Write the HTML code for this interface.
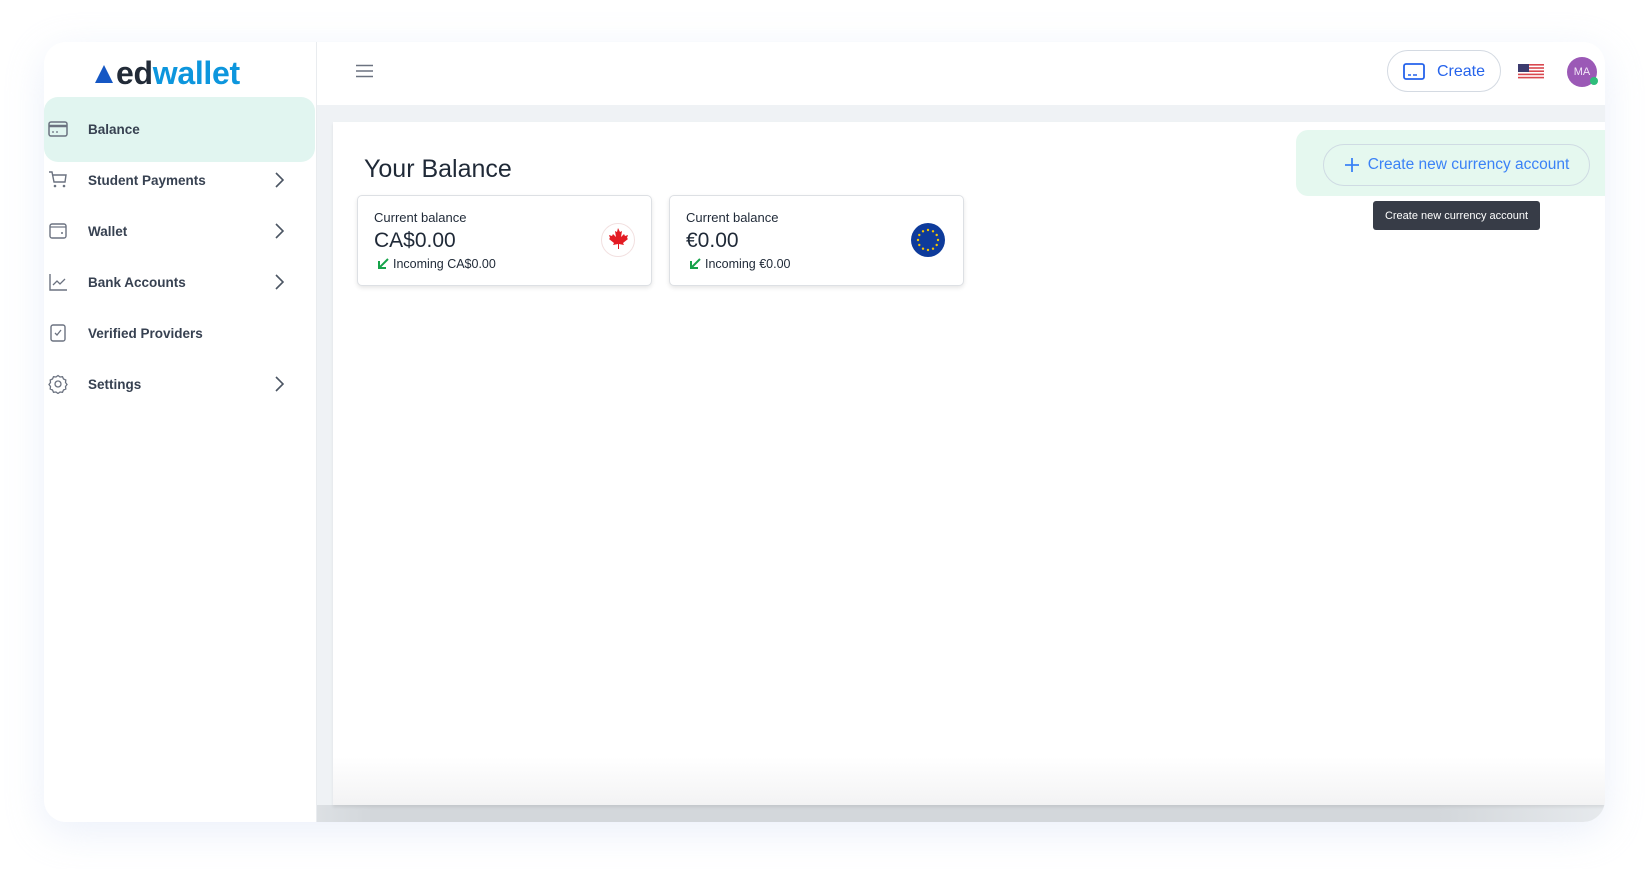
<!DOCTYPE html>
<html><head><meta charset="utf-8"><style>
*{box-sizing:border-box;margin:0;padding:0}
body{width:1650px;height:869px;background:#fff;font-family:"Liberation Sans",sans-serif;position:relative;overflow:hidden}
.abs{position:absolute}
.card{left:44px;top:42px;width:1561px;height:780px;background:#fff;border-radius:22px;box-shadow:0 10px 40px rgba(210,222,245,.45);overflow:hidden}
.side{left:0;top:0;width:273px;height:780px;background:#fff;border-right:1px solid #e9ecef}
.gray{left:273px;top:63px;width:1288px;height:717px;background:#eff2f5}
.botband{left:160px;top:763px;width:1401px;height:17px;background:linear-gradient(90deg,rgba(211,215,219,0),#d3d7db 12%,#d3d7db 88%,rgba(211,215,219,.3))}
.head{left:274px;top:0;width:1287px;height:63px;background:#fff}
.panel{left:289px;top:80px;width:1272px;height:683px;background:linear-gradient(#fff 93%,#f3f3f4);box-shadow:0 2px 3px rgba(0,0,0,.08)}
.item{position:absolute;left:0;width:273px;height:50px;display:flex;align-items:center;font-size:13.5px;font-weight:bold;color:#374151}
.item svg.i{position:absolute;left:4px}
.item span{position:absolute;left:44px}
.item svg.c{position:absolute;left:230px}
.bc{position:absolute;top:153px;width:295px;height:91px;background:#fff;border:1px solid #dde0e4;border-radius:5px;box-shadow:0 2px 4px rgba(0,0,0,.1)}
.bc .l{position:absolute;left:16px;top:14px;font-size:13px;color:#1f2937}
.bc .a{position:absolute;left:16px;top:33px;font-size:21px;color:#1f2937}
.bc .n{position:absolute;left:18px;top:61px;font-size:12.5px;color:#1f2937;display:flex;align-items:center;gap:3px}
</style></head><body>
<div class="abs card">
  <div class="abs gray"></div>
  <div class="abs botband"></div>
  <div class="abs head"></div>
  <div class="abs panel">
    <div class="abs" style="left:31px;top:33px;font-size:25px;color:#1f2937">Your Balance</div>
    <div class="bc" style="left:24px;top:73px">
      <div class="l">Current balance</div><div class="a">CA$0.00</div>
      <div class="n"><svg width="14" height="14" viewBox="0 0 14 14"><path d="M12 2L3 11M3 4v7h7" stroke="#16a34a" stroke-width="2" fill="none"/></svg>Incoming CA$0.00</div>
      <svg class="abs" style="left:243px;top:27px" width="34" height="34" viewBox="0 0 34 34"><circle cx="17" cy="17" r="16.5" fill="#fff" stroke="#f2e0e0"/><path d="M17 5l2 4 2-1-1 6 3-3 1 2 3-1-1 3 1 1-5 4 1 2-5-1v5h-1v-5l-5 1 1-2-5-4 1-1-1-3 3 1 1-2 3 3-1-6 2 1z" fill="#e31b23"/></svg>
    </div>
    <div class="bc" style="left:336px;top:73px">
      <div class="l">Current balance</div><div class="a">€0.00</div>
      <div class="n"><svg width="14" height="14" viewBox="0 0 14 14"><path d="M12 2L3 11M3 4v7h7" stroke="#16a34a" stroke-width="2" fill="none"/></svg>Incoming €0.00</div>
      <svg class="abs" style="left:241px;top:27px" width="34" height="34" viewBox="0 0 34 34"><circle cx="17" cy="17" r="17" fill="#0e3b9b"/><g fill="#f5c400"><circle cx="17" cy="7" r="1.2"/><circle cx="22" cy="8.3" r="1.2"/><circle cx="25.7" cy="12" r="1.2"/><circle cx="27" cy="17" r="1.2"/><circle cx="25.7" cy="22" r="1.2"/><circle cx="22" cy="25.7" r="1.2"/><circle cx="17" cy="27" r="1.2"/><circle cx="12" cy="25.7" r="1.2"/><circle cx="8.3" cy="22" r="1.2"/><circle cx="7" cy="17" r="1.2"/><circle cx="8.3" cy="12" r="1.2"/><circle cx="12" cy="8.3" r="1.2"/></g></svg>
    </div>
  </div>
  <div class="abs" style="left:1252px;top:88px;width:309px;height:66px;background:#e5f8ef;border-radius:12px 0 0 12px"></div>
  <div class="abs" style="left:1279px;top:102px;width:267px;height:42px;border:1px solid #cfdbe3;border-radius:21px;display:flex;align-items:center;justify-content:center;gap:8px;color:#3b82f6;font-size:15.5px">
    <svg width="16" height="16" viewBox="0 0 16 16"><path d="M8 1v14M1 8h14" stroke="#3b82f6" stroke-width="1.8"/></svg>Create new currency account</div>
  <div class="abs" style="left:1329px;top:159px;width:167px;height:29px;background:#373c47;border-radius:3px;color:#fff;font-size:11px;display:flex;align-items:center;justify-content:center">Create new currency account</div>
  <div class="abs side">
    <div class="abs" style="left:51px;top:13px;display:flex;align-items:center">
      <svg width="18" height="18" viewBox="0 0 18 18"><path d="M9 0L18 18H0z" fill="#1557c4"/></svg>
      <span style="font-size:32px;font-weight:bold;letter-spacing:-0.3px;color:#222b38;margin-left:3px">ed</span><span style="font-size:32px;font-weight:bold;letter-spacing:-0.3px;color:#0d96dd">wallet</span>
    </div>
    <div class="abs" style="left:0;top:55px;width:271px;height:65px;background:#e1f5f0;border-radius:14px"></div>
    <div class="item" style="top:62px"><svg class="i" width="20" height="18" viewBox="0 0 20 18"><rect x="1" y="2" width="18" height="14" rx="2" fill="none" stroke="#6b7280" stroke-width="1.5"/><path d="M1 6h18" stroke="#6b7280" stroke-width="2.5"/><path d="M4 12h2M8 12h2" stroke="#6b7280" stroke-width="1.3"/></svg><span>Balance</span></div>
    <div class="item" style="top:113px"><svg class="i" width="20" height="20" viewBox="0 0 20 20"><path d="M1 2h3l2 10h11l1-7H5" fill="none" stroke="#6b7280" stroke-width="1.4"/><circle cx="7" cy="16" r="1.3" fill="#6b7280"/><circle cx="16" cy="16" r="1.3" fill="#6b7280"/></svg><span>Student Payments</span><svg class="c" width="10" height="16" viewBox="0 0 10 16"><path d="M2 1l7 7-7 7" fill="none" stroke="#4b5563" stroke-width="1.6"/></svg></div>
    <div class="item" style="top:164px"><svg class="i" width="20" height="20" viewBox="0 0 20 20"><rect x="2" y="3" width="16" height="14" rx="2" fill="none" stroke="#6b7280" stroke-width="1.4"/><path d="M2 6h16" stroke="#6b7280" stroke-width="1.2"/><circle cx="14" cy="12" r="1" fill="#6b7280"/></svg><span>Wallet</span><svg class="c" width="10" height="16" viewBox="0 0 10 16"><path d="M2 1l7 7-7 7" fill="none" stroke="#4b5563" stroke-width="1.6"/></svg></div>
    <div class="item" style="top:215px"><svg class="i" width="20" height="20" viewBox="0 0 20 20"><path d="M2 2v16h17" fill="none" stroke="#6b7280" stroke-width="1.4"/><path d="M5 13l4-4 3 3 5-5" fill="none" stroke="#6b7280" stroke-width="1.3"/></svg><span>Bank Accounts</span><svg class="c" width="10" height="16" viewBox="0 0 10 16"><path d="M2 1l7 7-7 7" fill="none" stroke="#4b5563" stroke-width="1.6"/></svg></div>
    <div class="item" style="top:266px"><svg class="i" width="20" height="20" viewBox="0 0 20 20"><rect x="3" y="2" width="14" height="16" rx="2" fill="none" stroke="#6b7280" stroke-width="1.4"/><path d="M7 10l2 2 4-5" fill="none" stroke="#6b7280" stroke-width="1.3"/></svg><span>Verified Providers</span></div>
    <div class="item" style="top:317px"><svg class="i" width="20" height="20" viewBox="0 0 20 20"><path d="M10 1.5l2 1.5 2.5-.3 1 2.3 2.3 1-.3 2.5 1.5 2-1.5 2 .3 2.5-2.3 1-1 2.3-2.5-.3-2 1.5-2-1.5-2.5.3-1-2.3-2.3-1 .3-2.5-1.5-2 1.5-2-.3-2.5 2.3-1 1-2.3 2.5.3z" fill="none" stroke="#6b7280" stroke-width="1.3"/><circle cx="10" cy="10" r="3" fill="none" stroke="#6b7280" stroke-width="1.3"/></svg><span>Settings</span><svg class="c" width="10" height="16" viewBox="0 0 10 16"><path d="M2 1l7 7-7 7" fill="none" stroke="#4b5563" stroke-width="1.6"/></svg></div>
  </div>
  <svg class="abs" style="left:312px;top:22px" width="17" height="14" viewBox="0 0 17 14"><path d="M0 1.5h17M0 7h17M0 12.5h17" stroke="#6b7280" stroke-width="1.6"/></svg>
  <div class="abs" style="left:1343px;top:8px;width:114px;height:42px;border:1px solid #d4dae2;border-radius:21px;display:flex;align-items:center;justify-content:center;gap:12px;color:#2563eb;font-size:16px;padding-top:1px">
    <svg width="22" height="17" viewBox="0 0 22 17"><rect x="1" y="1" width="20" height="15" rx="2" fill="none" stroke="#2563eb" stroke-width="1.8"/><path d="M5 12h3M10 12h4" stroke="#2563eb" stroke-width="1.5"/></svg>Create</div>
  <svg class="abs" style="left:1474px;top:22px" width="26" height="15" viewBox="0 0 26 15"><rect width="26" height="15" fill="#fff"/><g fill="#d9484f"><rect y="0" width="26" height="1.6"/><rect y="3.2" width="26" height="1.6"/><rect y="6.4" width="26" height="1.6"/><rect y="9.6" width="26" height="1.6"/><rect y="12.8" width="26" height="1.6"/></g><rect width="11" height="8" fill="#3c3b6e"/></svg>
  <div class="abs" style="left:1523px;top:15px;width:30px;height:30px;border-radius:50%;background:#9b59b6;color:#f3e8f8;font-size:11px;display:flex;align-items:center;justify-content:center">MA</div>
  <div class="abs" style="left:1546px;top:35px;width:8px;height:8px;border-radius:50%;background:#2ebd7a"></div>
</div>
</body></html>
